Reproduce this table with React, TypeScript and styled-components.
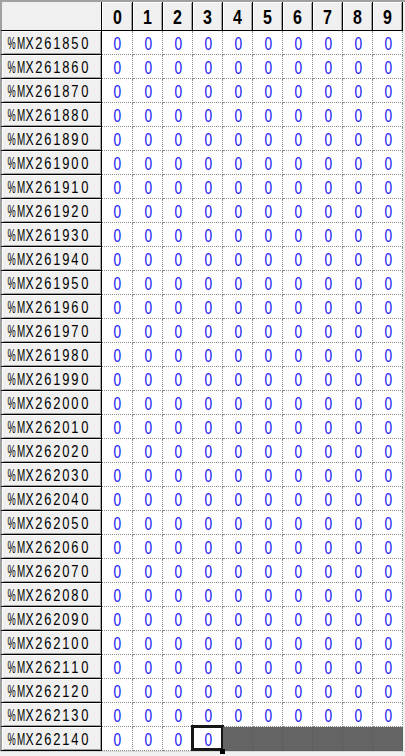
import React from "react";
import styled, { createGlobalStyle, css } from "styled-components";

const GlobalStyle = createGlobalStyle`
  html, body { margin: 0; padding: 0; background: #f0f0f0; }
  body { font-family: "Liberation Sans", Arial, sans-serif; }
`;

const Frame = styled.div`
  width: 405px;
  height: 756px;
  overflow: hidden;
  background: #f0f0f0;
  border-top: 2px solid #a0a0a0;
  box-sizing: border-box;
`;

const Grid = styled.div`
  display: grid;
  grid-template-columns: 102px 31px repeat(9, 30px);
  grid-template-rows: 29px;
  grid-auto-rows: 24px;
  width: 403px;
`;

const Corner = styled.div`
  background: #f0f0f0;
  border-left: 2px solid #a0a0a0;
  border-right: 1px solid #000;
  border-bottom: 1px solid #000;
  box-sizing: border-box;
`;

const ColHead = styled.div`
  background: #f0f0f0;
  box-sizing: border-box;
  border-right: 1px solid #000;
  border-bottom: 1px solid #000;
  box-shadow: inset 1px 1px 0 #fff, inset -1px 0 0 #a0a0a0;
  display: flex;
  align-items: center;
  justify-content: center;
  padding-left: 1px;
  padding-top: 2px;
`;

const HeadDigit = styled.span`
  display: inline-block;
  font-family: "Liberation Sans", Arial, sans-serif;
  font-weight: bold;
  font-size: 20px;
  line-height: 1;
  color: #000;
  transform: scaleX(0.8);
`;

const RowHead = styled.div`
  background: #f0f0f0;
  box-sizing: border-box;
  border-left: 2px solid #a0a0a0;
  border-right: 1px solid #000;
  border-bottom: 1px solid #000;
  box-shadow: inset 1px 1px 0 #fff, inset -1px -1px 0 #a0a0a0;
  display: flex;
  align-items: center;
  padding-left: 5px;
  padding-top: 1px;
  overflow: hidden;
`;

const RowLabel = styled.span`
  display: flex;
  font-family: "Liberation Sans", Arial, sans-serif;
  font-size: 17px;
  line-height: 1;
  color: #000;
  white-space: nowrap;
`;

const Glyph = styled.span<{ $scale: number }>`
  display: inline-flex;
  justify-content: center;
  width: 9.1px;
  overflow: visible;
  & > span {
    display: inline-block;
    transform: scaleX(${(p) => p.$scale});
  }
`;

const glyphScale = (ch: string) => {
  if (ch === "%") return 0.54;
  if (ch === "M") return 0.58;
  if (ch === "X") return 0.72;
  return 0.76;
};

const Cell = styled.div<{ $dark?: boolean; $focus?: boolean }>`
  position: relative;
  box-sizing: border-box;
  background: #fff;
  border-right: 1px dotted #8c8c8c;
  border-bottom: 1px dotted #8c8c8c;
  display: flex;
  align-items: center;
  justify-content: center;
  padding-left: 1px;
  ${(p) =>
    p.$dark &&
    css`
      background: #646464;
      border-right-color: #5a5a5a;
      border-bottom-color: #5a5a5a;
    `}
  ${(p) =>
    p.$focus &&
    css`
      &::after {
        content: "";
        position: absolute;
        left: -2px;
        top: -2px;
        right: -2px;
        bottom: -1px;
        border: 3px solid #161616;
        pointer-events: none;
      }
      &::before {
        content: "";
        position: absolute;
        right: -3px;
        bottom: -4px;
        width: 5px;
        height: 5px;
        background: #000;
        z-index: 2;
      }
    `}
`;

const Value = styled.span`
  display: inline-block;
  font-family: "Liberation Sans", Arial, sans-serif;
  font-size: 19px;
  line-height: 1;
  color: #1515f5;
  transform: scaleX(0.72);
  padding-top: 1px;
`;

const BottomStrip = styled.div`
  height: 5px;
  border-top: 1px solid #d8d8d8;
  background: #f0f0f0;
`;

const cols = [0, 1, 2, 3, 4, 5, 6, 7, 8, 9];
const rows: string[] = [];
for (let n = 261850; n <= 262140; n += 10) rows.push(`%MX${n}`);

export default function App() {
  return (
    <>
      <GlobalStyle />
      <Frame>
        <Grid>
          <Corner />
          {cols.map((c) => (
            <ColHead key={`h${c}`}>
              <HeadDigit>{c}</HeadDigit>
            </ColHead>
          ))}
          {rows.map((label, ri) => {
            const last = ri === rows.length - 1;
            return (
              <React.Fragment key={label}>
                <RowHead>
                  <RowLabel aria-label={label}>
                    {label.split("").map((ch, i) => (
                      <Glyph key={i} $scale={glyphScale(ch)}>
                        <span>{ch}</span>
                      </Glyph>
                    ))}
                  </RowLabel>
                </RowHead>
                {cols.map((c) => {
                  const dark = last && c >= 4;
                  const focus = last && c === 3;
                  return (
                    <Cell key={c} $dark={dark} $focus={focus}>
                      {!dark && <Value>0</Value>}
                    </Cell>
                  );
                })}
              </React.Fragment>
            );
          })}
        </Grid>
        <BottomStrip />
      </Frame>
    </>
  );
}
